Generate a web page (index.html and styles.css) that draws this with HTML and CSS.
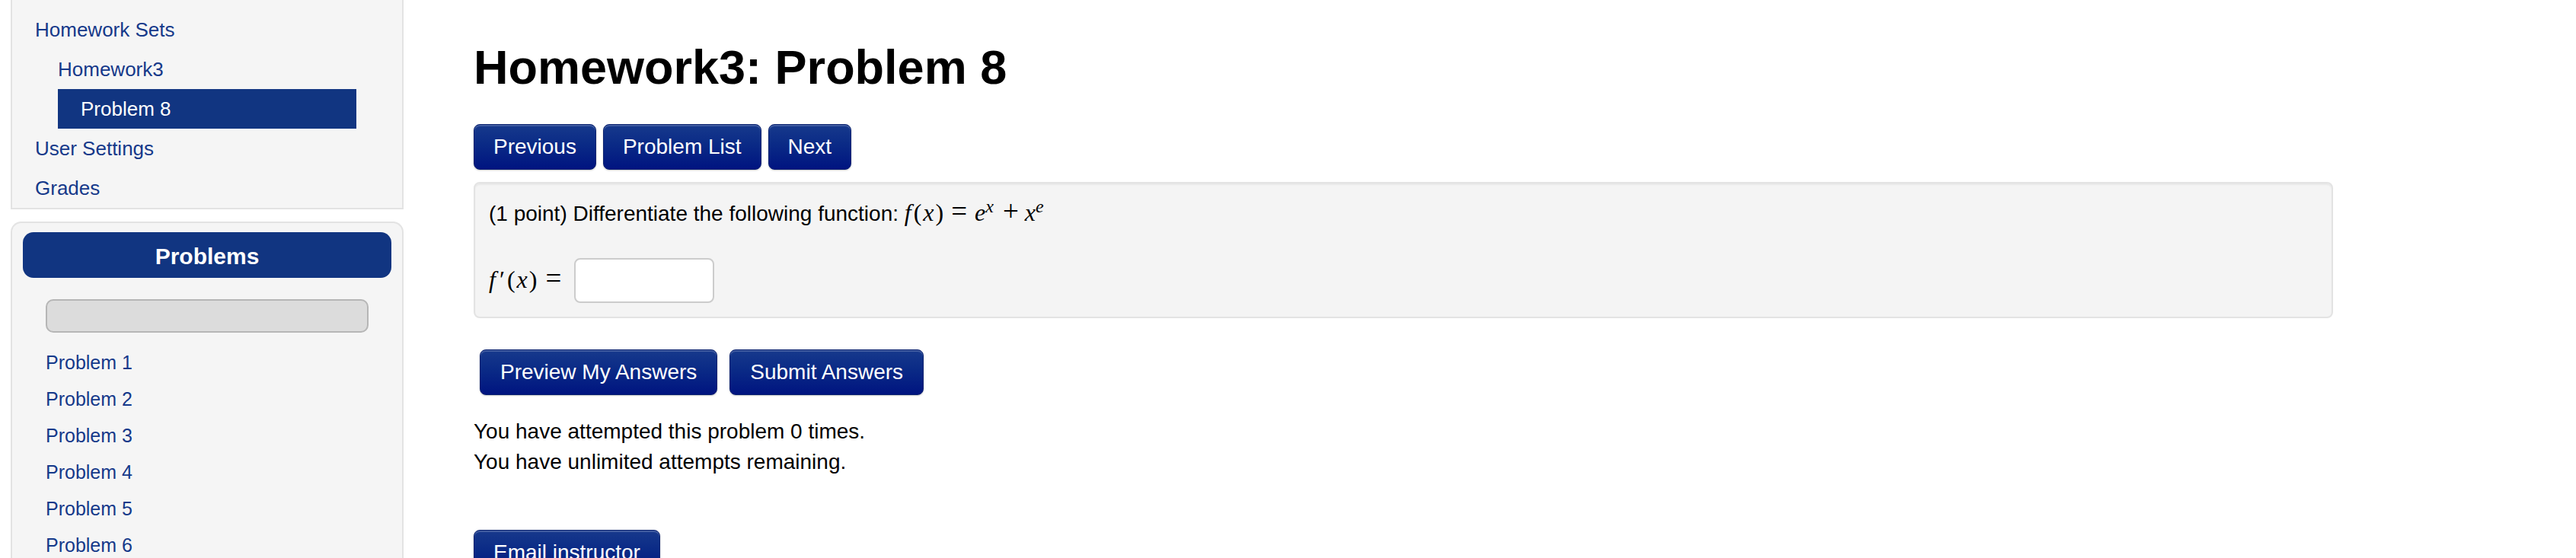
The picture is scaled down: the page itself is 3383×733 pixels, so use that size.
FILE: index.html
```html
<!DOCTYPE html>
<html lang="en">
<head>
<meta charset="utf-8">
<title>Homework3: Problem 8</title>
<link rel="stylesheet" href="styles.css">
</head>
<body>
<div class="page">
  <aside class="sidebar">
    <nav class="well nav-box">
      <ul class="nav">
        <li><a class="nav-link" href="#">Homework Sets</a>
          <ul class="nav sub">
            <li><a class="nav-link" href="#">Homework3</a></li>
            <li><a class="nav-link active" href="#">Problem 8</a></li>
          </ul>
        </li>
        <li><a class="nav-link" href="#">User Settings</a></li>
        <li><a class="nav-link" href="#">Grades</a></li>
      </ul>
    </nav>
    <div class="well problems-box">
      <h2 class="problems-head">Problems</h2>
      <div class="progress"></div>
      <ul class="problem-list">
        <li><a href="#">Problem 1</a></li>
        <li><a href="#">Problem 2</a></li>
        <li><a href="#">Problem 3</a></li>
        <li><a href="#">Problem 4</a></li>
        <li><a href="#">Problem 5</a></li>
        <li><a href="#">Problem 6</a></li>
      </ul>
    </div>
  </aside>
  <main class="main">
    <h1 class="title">Homework3: Problem 8</h1>
    <div class="btn-row">
      <a class="btn" href="#">Previous</a>
      <a class="btn" href="#">Problem List</a>
      <a class="btn" href="#">Next</a>
    </div>
    <div class="problem-box">
      <p class="question">(1 point) Differentiate the following function: <span class="math"><i class="f">f</i>(<i class="x">x</i>)<span class="op eq">=</span><i>e</i><sup><i>x</i></sup><span class="op plus">+</span><i>x</i><sup><i>e</i></sup></span></p>
      <div class="answer-row">
        <span class="math"><i class="f">f</i><span class="prime">′</span>(<i class="x">x</i>)<span class="op eq2">=</span></span>
        <input class="answer" type="text" aria-label="answer">
      </div>
    </div>
    <div class="submit-row">
      <a class="btn" href="#">Preview My Answers</a>
      <a class="btn" href="#">Submit Answers</a>
    </div>
    <div class="attempts">
      <div>You have attempted this problem 0 times.</div>
      <div>You have unlimited attempts remaining.</div>
    </div>
    <div class="email-row">
      <a class="btn" href="#">Email instructor</a>
    </div>
  </main>
</div>
</body>
</html>
```

FILE: styles.css
```css
html, body {
  margin: 0;
  padding: 0;
  background: #ffffff;
}

body {
  font-family: "Liberation Sans", Arial, Helvetica, sans-serif;
  color: #000000;
  overflow: hidden;
}

a {
  text-decoration: none;
}

.page {
  display: grid;
  grid-template-columns: 516px 2442px;
  column-gap: 92px;
  padding-left: 14px;
  align-items: start;
}

/* ---------- sidebar ---------- */
.well {
  background: #f5f5f5;
  border: 2px solid #e3e3e3;
  box-sizing: border-box;
}

.nav-box {
  border-top: 0;
  padding: 13px 30px 0;
}

.nav {
  list-style: none;
  margin: 0;
  padding: 0;
}

.nav.sub {
  margin: 0 30px;
}

.nav-link {
  display: block;
  font-size: 26px;
  line-height: 52px;
  color: #15398a;
}

.nav-link.active {
  background: #113581;
  color: #ffffff;
  padding-left: 30px;
}

.problems-box {
  margin-top: 16px;
  border-radius: 14px 14px 0 0;
  border-bottom: 0;
  padding: 12px 14px 0;
}

.problems-head {
  margin: 0;
  height: 60px;
  line-height: 64px;
  border-radius: 14px;
  background: #113581;
  color: #ffffff;
  font-size: 30px;
  font-weight: bold;
  text-align: center;
}

.progress {
  margin: 28px 30px 0;
  height: 44px;
  box-sizing: border-box;
  background: #dcdcdc;
  border: 2px solid #b6b6b6;
  border-radius: 10px;
}

.problem-list {
  list-style: none;
  margin: 15px 0 0 30px;
  padding: 0;
}

.problem-list li {
  font-size: 25px;
  line-height: 48px;
}

.problem-list a {
  color: #15398a;
}

/* ---------- main ---------- */
.main {
  padding-top: 53px;
}

.title {
  margin: 0;
  font-size: 63px;
  font-weight: bold;
  line-height: 70px;
  color: #000000;
}

.btn {
  display: inline-block;
  box-sizing: border-box;
  height: 60px;
  line-height: 58px;
  padding: 0 25px;
  font-size: 28px;
  color: #ffffff;
  border: 1px solid #0b2270;
  border-radius: 8px;
  background: linear-gradient(to bottom, #17398c 0%, #0a2a86 45%, #001480 100%);
  box-shadow: inset 0 2px 0 rgba(255, 255, 255, 0.18), 0 1px 2px rgba(0, 0, 0, 0.2);
  white-space: nowrap;
}

.btn-row {
  margin-top: 40px;
  display: flex;
  gap: 9px;
}

.btn-row .btn:nth-child(3) {
  padding: 0 25px;
}

.problem-box {
  margin-top: 16px;
  background: #f4f4f4;
  border: 2px solid #e3e3e3;
  border-radius: 8px;
  box-shadow: inset 0 2px 2px rgba(0, 0, 0, 0.05);
  padding: 20px 18px 18px;
}

.question {
  margin: 0;
  font-size: 28px;
  line-height: 40px;
}

.math {
  font-family: "Liberation Serif", "Times New Roman", serif;
  font-size: 32px;
  line-height: 0;
  white-space: nowrap;
}

.math i {
  font-style: italic;
}

.math .f {
  margin-right: 3px;
}

.math .x {
  margin: 0 2px;
}

.math sup {
  font-size: 24px;
  vertical-align: 11px;
  line-height: 0;
}

.math .op {
  font-size: 37px;
  line-height: 0;
}

.math .eq {
  margin: 0 10px 0 10px;
}

.math .plus {
  margin: 0 8px 0 12px;
}

.prime {
  font-size: 32px;
  margin: 0 3px 0 2px;
}

.answer-row {
  margin-top: 38px;
  display: flex;
  align-items: center;
}

.answer-row .math {
  line-height: 34px;
  margin-bottom: 4px;
}

.math .eq2 {
  margin-left: 11px;
}

.answer {
  margin-left: 17px;
  width: 184px;
  height: 59px;
  box-sizing: border-box;
  background: #ffffff;
  border: 2px solid #cccccc;
  border-radius: 8px;
  padding: 0 10px;
  font-size: 28px;
}

.submit-row {
  margin-top: 41px;
  padding-left: 8px;
  display: flex;
  gap: 16px;
}

.submit-row .btn {
  padding: 0 26px;
}

.attempts {
  margin-top: 28px;
  font-size: 28px;
  line-height: 40px;
}

.email-row {
  margin-top: 69px;
  display: flex;
}
```
